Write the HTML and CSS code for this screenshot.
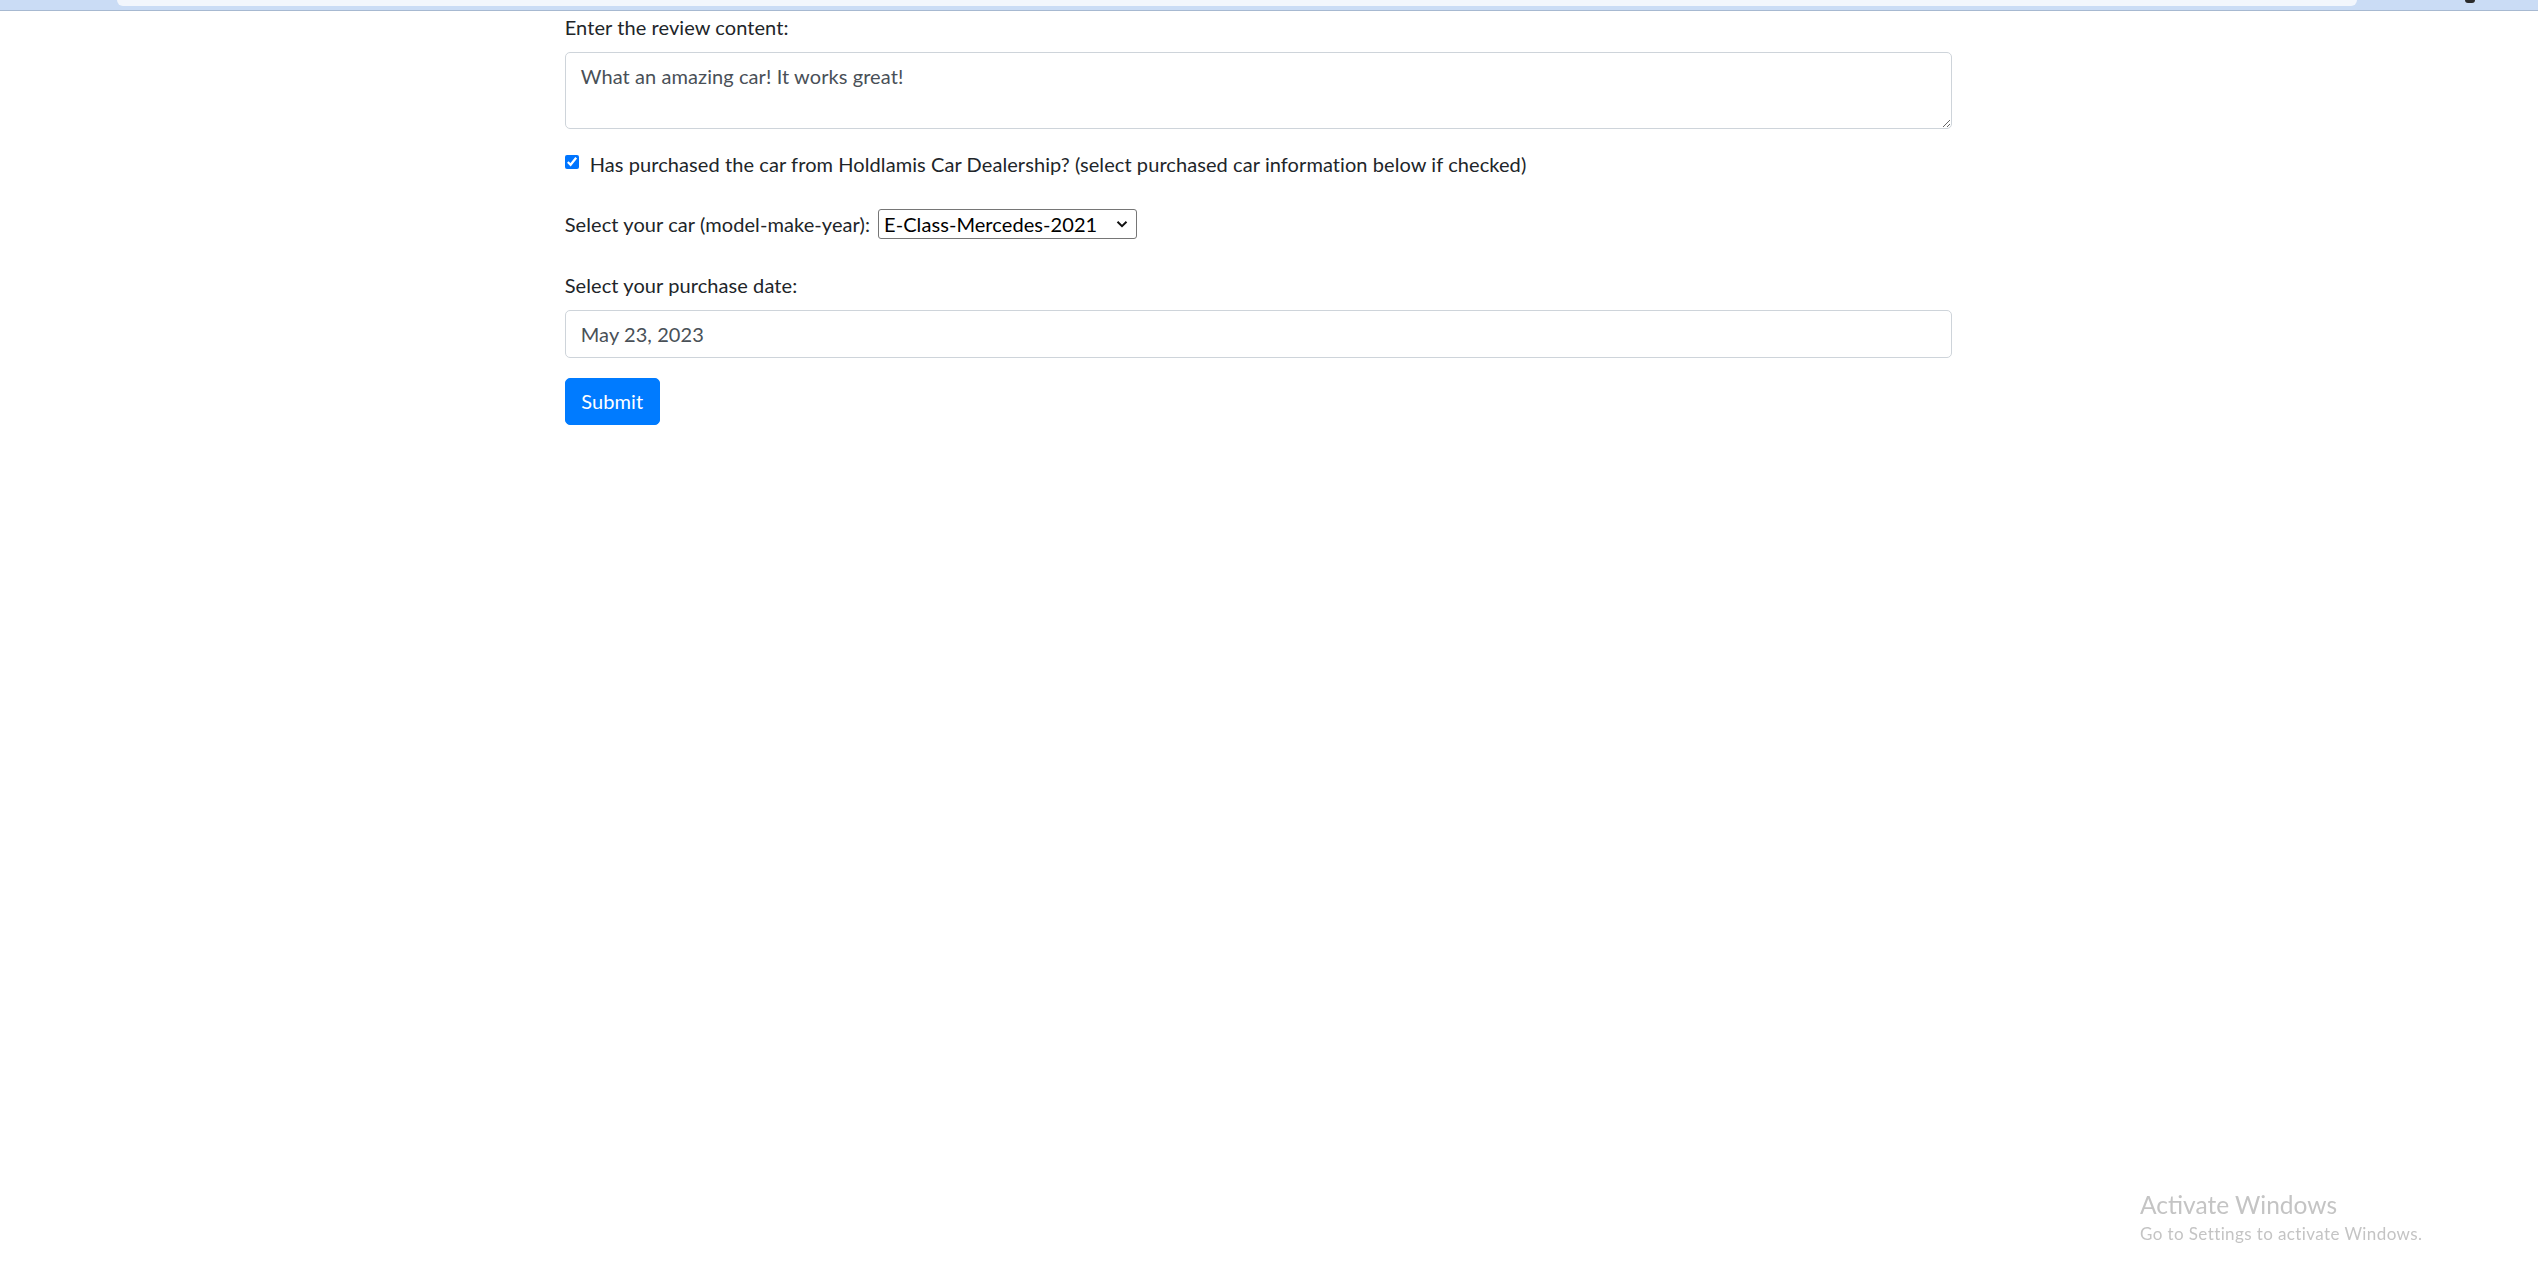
FILE: index.html
```html
<!DOCTYPE html>
<html lang="en">
<head>
    <meta charset="UTF-8">
    <title>Write a Review</title>
    <link rel="stylesheet" href="styles.css">
</head>
<body>

    <div class="chrome">
        <div class="address-bar"></div>
        <div class="avatar"></div>
    </div>

    <div class="page">
        <form class="container" onsubmit="return false">
            <div class="form-group">
                <label for="content">Enter the review content:</label>
                <textarea class="form-control review-text" id="content" rows="2">What an amazing car! It works great!</textarea>
            </div>

            <div class="form-group form-check">
                <input type="checkbox" id="purchasecheck" checked>
                <label for="purchasecheck">Has purchased the car from Holdlamis Car Dealership? (select purchased car information below if checked)</label>
            </div>

            <div class="car-row">
                <label for="car">Select your car (model-make-year):</label>
                <select id="car">
                    <option>E-Class-Mercedes-2021</option>
                    <option>A4-Audi-2020</option>
                    <option>Model 3-Tesla-2022</option>
                </select>
            </div>

            <div class="form-group">
                <label for="purchasedate">Select your purchase date:</label>
                <input type="text" class="form-control" id="purchasedate" value="May 23, 2023">
            </div>

            <button type="submit" class="btn-primary">Submit</button>
        </form>
    </div>

    <div class="activate">
        <div class="activate-title">Activate Windows</div>
        <div class="activate-sub">Go to Settings to activate Windows.</div>
    </div>

</body>
</html>
```
FILE: styles.css
```css
body {
    margin: 0;
    font-family: Lato, "Liberation Sans", sans-serif;
    font-size: 20px;
    line-height: 30px;
    letter-spacing: 0.08px;
    color: #212529;
    background: #fff;
}

/* bottom edge of the browser toolbar */
.chrome {
    display: flex;
    height: 10px;
    padding: 0 63px 0 117px;
    background: #cadcf5;
    border-bottom: 1px solid #a7b9d1;
}

.address-bar {
    flex: 1;
    height: 6px;
    margin-right: 108px;
    background: #f2f6fc;
    border-radius: 0 0 10px 10px;
}

.avatar {
    width: 10px;
    height: 3px;
    background: #2b2b2b;
    border-radius: 0 0 5px 5px;
}

.page {
    padding: 1px 21px 0 0;
}

.container {
    max-width: 1425px;
    margin: 0 auto;
    padding: 0 18.75px;
    box-sizing: border-box;
}

label {
    display: inline-block;
    margin-bottom: 10px;
}

.form-group {
    margin-bottom: 20px;
}

.form-control {
    display: block;
    width: 100%;
    box-sizing: border-box;
    height: 47.5px;
    padding: 7.5px 15px;
    font-family: inherit;
    font-size: 20px;
    line-height: 30px;
    letter-spacing: inherit;
    color: #495057;
    background: #fff;
    border: 1px solid #ced4da;
    border-radius: 5px;
    outline: none;
}

.review-text {
    height: 77px;
    resize: vertical;
}

.form-check {
    display: flex;
    align-items: flex-start;
}

.form-check input {
    width: 14px;
    height: 14px;
    margin: 6px 11px 0 0;
    accent-color: #0075ff;
}

.form-check label {
    margin-bottom: 0;
}

.car-row {
    display: flex;
    align-items: center;
    gap: 8px;
    height: 30px;
    margin: 30px 0 31px;
}

.car-row label {
    margin-bottom: 0;
}

.car-row select {
    appearance: none;
    box-sizing: border-box;
    width: 259px;
    height: 30px;
    padding: 0 30px 0 5px;
    font-family: inherit;
    font-size: 20px;
    line-height: 28px;
    letter-spacing: inherit;
    color: #000;
    background: #fff url("data:image/svg+xml,%3Csvg xmlns='http://www.w3.org/2000/svg' width='12' height='8' viewBox='0 0 12 8'%3E%3Cpath d='M1.5 1.8 6 6.2 10.5 1.8' fill='none' stroke='%23111' stroke-width='2'/%3E%3C/svg%3E") no-repeat right 8px center;
    border: 1px solid #767676;
    border-radius: 3px;
}

.btn-primary {
    padding: 7.5px 15.5px;
    font-family: inherit;
    font-size: 20px;
    line-height: 30px;
    letter-spacing: inherit;
    color: #fff;
    background: #007bff;
    border: 1px solid #007bff;
    border-radius: 5px;
    cursor: pointer;
}

/* Windows activation watermark sits on top of the page */
.activate {
    position: fixed;
    left: 2140px;
    top: 1190px;
    color: #c4c4c4;
    letter-spacing: 0;
    pointer-events: none;
}

.activate-title {
    font-size: 24.5px;
    line-height: 30px;
}

.activate-sub {
    font-size: 17px;
    line-height: 28px;
    letter-spacing: 0.4px;
}
```
